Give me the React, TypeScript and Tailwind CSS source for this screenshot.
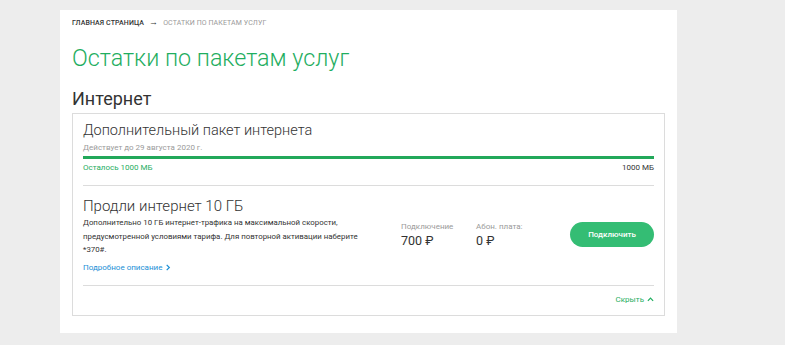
import React from 'react';

const ChevronRight = () => (
  <svg width="6" height="7" viewBox="0 0 6 8" fill="none" stroke="currentColor" strokeWidth={1.4} className="inline-block ml-[3px]">
    <path d="M1.5 1l3 3-3 3" />
  </svg>
);

const ChevronUp = () => (
  <svg width="7" height="5" viewBox="0 0 8 5" fill="none" stroke="currentColor" strokeWidth={1.4} className="inline-block ml-[3px]">
    <path d="M1 4l3-3 3 3" />
  </svg>
);

const App: React.FC = () => {
  return (
    <div className="w-[785px] h-[345px] bg-[#ededed] pt-[10px] pl-[60px] overflow-hidden" style={{ fontFamily: 'Roboto, "Noto Sans", sans-serif' }}>
      <div className="w-[617px] h-[323px] bg-white px-[12px] pt-[8px] text-[#333]">
        <div className="flex items-center text-[7px] leading-[10px] uppercase tracking-[0.1px]">
          <span className="font-medium text-[#333]">Главная страница</span>
          <span className="mx-[5px] text-[#333] text-[9px] leading-[10px] -translate-y-[1px]">→</span>
          <span className="text-[#999]">Остатки по пакетам услуг</span>
        </div>

        <h1 className="mt-[15px] text-[23.3px] leading-[30px] font-light text-[#1fae5f]">Остатки по пакетам услуг</h1>

        <h2 className="mt-[14px] text-[18px] leading-[24px] font-normal text-[#333]">Интернет</h2>

        <div className="mt-[2px] border border-[#dcdcdc] px-[10px] pt-[7px] pb-[9px]">
          <div className="text-[14.5px] leading-[20px] font-light text-[#333]">Дополнительный пакет интернета</div>
          <div className="mt-[1px] text-[8px] leading-[12px] text-[#9a9a9a]">Действует до 29 августа 2020 г.</div>
          <div className="mt-[2px] h-[3px] bg-[#22a85a]"></div>
          <div className="mt-[3px] flex justify-between text-[8px] leading-[12px]">
            <span className="text-[#1fae5f]">Осталось 1000 МБ</span>
            <span className="text-[#333]">1000 МБ</span>
          </div>

          <div className="mt-[11px] h-px bg-[#dcdcdc]"></div>

          <div className="flex items-center">
            <div className="w-[318px] shrink-0">
              <div className="mt-[10px] text-[15px] leading-[20px] font-light text-[#333]">Продли интернет 10 ГБ</div>
              <p className="w-[286px] text-[7.85px] leading-[13.5px] text-[#333]">
                Дополнительно 10 ГБ интернет-трафика на максимальной скорости, предусмотренной условиями тарифа. Для повторной активации наберите *370#.
              </p>
              <div className="mt-[5px] flex items-center text-[8px] leading-[12px] text-[#1a8fd6]">
                Подробное описание
                <ChevronRight />
              </div>
            </div>
            <div className="w-[75px] shrink-0 mt-[10px]">
              <div className="text-[8px] leading-[12px] text-[#9a9a9a]">Подключение</div>
              <div className="text-[12.5px] leading-[16px] text-[#333]">700 ₽</div>
            </div>
            <div className="w-[75px] shrink-0 mt-[10px]">
              <div className="text-[8px] leading-[12px] text-[#9a9a9a]">Абон. плата:</div>
              <div className="text-[12.5px] leading-[16px] text-[#333]">0 ₽</div>
            </div>
            <button className="ml-auto mt-[10px] w-[84px] h-[25px] rounded-full bg-[#34bd74] text-white text-[8px] font-medium">
              Подключить
            </button>
          </div>

          <div className="mt-[11px] h-px bg-[#dcdcdc]"></div>

          <div className="mt-[8px] flex justify-end items-center text-[8px] leading-[12px] text-[#1fae5f]">
            Скрыть
            <ChevronUp />
          </div>
        </div>
      </div>
    </div>
  );
};

export default App;
